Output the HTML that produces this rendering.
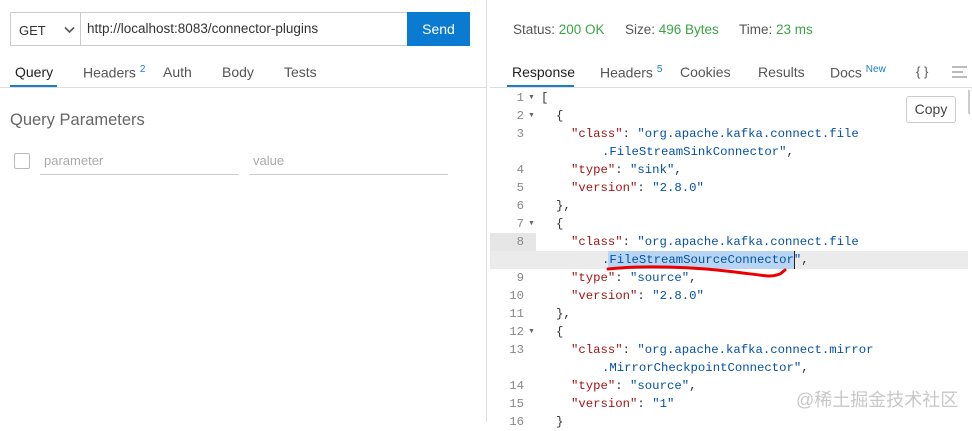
<!DOCTYPE html>
<html><head><meta charset="utf-8"><style>
*{margin:0;padding:0;box-sizing:border-box}
body{width:972px;height:422px;background:#fff;position:relative;overflow:hidden;font-family:"Liberation Sans","DejaVu Sans",sans-serif;color:#333}
.a{position:absolute;white-space:nowrap}
.code{font-family:"Liberation Mono",monospace;font-size:12.3px;line-height:18px;color:#333}
.k{color:#a31515}.s{color:#0451a5}
.ln{position:absolute;left:490px;width:34px;text-align:right;font-family:"Liberation Mono",monospace;font-size:12.3px;line-height:18px;color:#888}
.fa{position:absolute;left:528px;font-size:7px;color:#666}
</style></head><body>
<!-- left -->
<div class="a" style="left:10px;top:12px;width:71px;height:34px;border:1px solid #ccc"></div>
<div class="a" style="left:19px;top:23px;font-size:13px;color:#333">GET</div>
<svg class="a" style="left:64px;top:26px" width="11" height="8"><path d="M1 1.5L5.5 6L10 1.5" fill="none" stroke="#555" stroke-width="1.6"/></svg>
<div class="a" style="left:80px;top:12px;width:328px;height:34px;border:1px solid #ccc;border-left:none"></div>
<div class="a" style="left:87px;top:21px;font-size:13.5px;color:#333">http://localhost:8083/connector-plugins</div>
<div class="a" style="left:407px;top:12px;width:63px;height:34px;background:#0a7bd0;color:#fff;font-size:14px;text-align:center;line-height:34px">Send</div>
<div class="a" style="left:15px;top:64px;font-size:14px;color:#222">Query</div>
<div class="a" style="left:10px;top:85px;width:47px;height:3px;background:#1a7fc4"></div>
<div class="a" style="left:83px;top:64px;font-size:14px;color:#555">Headers <sup style="font-size:10px;color:#1a7fc4">2</sup></div>
<div class="a" style="left:163px;top:64px;font-size:14px;color:#555">Auth</div>
<div class="a" style="left:222px;top:64px;font-size:14px;color:#555">Body</div>
<div class="a" style="left:284px;top:64px;font-size:14px;color:#555">Tests</div>
<div class="a" style="left:0;top:87px;width:486px;height:1px;background:#ddd"></div>
<div class="a" style="left:10px;top:111px;font-size:16.5px;color:#666">Query Parameters</div>
<div class="a" style="left:14px;top:153px;width:16px;height:16px;border:1px solid #bbb;border-radius:2px"></div>
<div class="a" style="left:44px;top:153px;font-size:13px;color:#aaa">parameter</div>
<div class="a" style="left:40px;top:174px;width:199px;height:1px;background:#ccc"></div>
<div class="a" style="left:253px;top:153px;font-size:13px;color:#aaa">value</div>
<div class="a" style="left:249px;top:174px;width:199px;height:1px;background:#ccc"></div>
<div class="a" style="left:486px;top:0;width:1px;height:422px;background:#ddd"></div>
<!-- right -->
<div class="a" style="left:513px;top:22px;font-size:13.5px;color:#555">Status: <span style="color:#3aa545">200 OK</span></div>
<div class="a" style="left:625px;top:22px;font-size:13.5px;color:#555">Size: <span style="color:#3aa545">496 Bytes</span></div>
<div class="a" style="left:739px;top:22px;font-size:13.5px;color:#555">Time: <span style="color:#3aa545">23 ms</span></div>
<div class="a" style="left:512px;top:64px;font-size:14px;color:#222">Response</div>
<div class="a" style="left:507px;top:85px;width:67px;height:3px;background:#1a7fc4"></div>
<div class="a" style="left:600px;top:64px;font-size:14px;color:#555">Headers <sup style="font-size:10px;color:#1a7fc4">5</sup></div>
<div class="a" style="left:680px;top:64px;font-size:14px;color:#555">Cookies</div>
<div class="a" style="left:758px;top:64px;font-size:14px;color:#555">Results</div>
<div class="a" style="left:830px;top:64px;font-size:14px;color:#555">Docs <sup style="font-size:10px;color:#1a7fc4">New</sup></div>
<div class="a" style="left:916px;top:64px;font-size:13px;color:#555">{ }</div>
<svg class="a" style="left:952px;top:66px" width="16" height="12"><path d="M0 1H15M0 6H11M0 11H15" stroke="#777" stroke-width="1.1"/></svg>
<div class="a" style="left:490px;top:87px;width:482px;height:1px;background:#ddd"></div>
<div class="a" style="left:968px;top:90px;width:2px;height:24px;background:#ccc"></div>
<div class="a" style="left:906px;top:96px;width:50px;height:27px;border:1px solid #ccc;border-radius:3px;font-size:14px;color:#444;text-align:center;line-height:25px;background:#fff">Copy</div>
<!-- highlight -->
<div class="a" style="left:490px;top:233px;width:46px;height:18px;background:#e6e6e6"></div>
<div class="a" style="left:490px;top:251px;width:478px;height:18px;background:#ebebeb"></div>
<div class="a" style="left:608px;top:251px;width:186px;height:18px;background:#b9d5f4"></div>
<div class="a" style="left:794px;top:251px;width:1px;height:18px;background:#222"></div>
<!-- line numbers -->
<div class="ln" style="top:89px">1</div><div class="fa" style="top:94px">▼</div>
<div class="ln" style="top:107px">2</div><div class="fa" style="top:112px">▼</div>
<div class="ln" style="top:125px">3</div>
<div class="ln" style="top:161px">4</div>
<div class="ln" style="top:179px">5</div>
<div class="ln" style="top:197px">6</div>
<div class="ln" style="top:215px">7</div><div class="fa" style="top:220px">▼</div>
<div class="ln" style="top:233px">8</div>
<div class="ln" style="top:269px">9</div>
<div class="ln" style="top:287px">10</div>
<div class="ln" style="top:305px">11</div>
<div class="ln" style="top:323px">12</div><div class="fa" style="top:328px">▼</div>
<div class="ln" style="top:341px">13</div>
<div class="ln" style="top:377px">14</div>
<div class="ln" style="top:395px">15</div>
<div class="ln" style="top:413px">16</div>
<!-- code -->
<div class="a code" style="left:541px;top:89px">[</div>
<div class="a code" style="left:556px;top:107px">{</div>
<div class="a code" style="left:571px;top:125px"><span class="k">"class"</span>: <span class="s">"org.apache.kafka.connect.file</span></div>
<div class="a code" style="left:602px;top:143px"><span class="s">.FileStreamSinkConnector"</span>,</div>
<div class="a code" style="left:571px;top:161px"><span class="k">"type"</span>: <span class="s">"sink"</span>,</div>
<div class="a code" style="left:571px;top:179px"><span class="k">"version"</span>: <span class="s">"2.8.0"</span></div>
<div class="a code" style="left:556px;top:197px">},</div>
<div class="a code" style="left:556px;top:215px">{</div>
<div class="a code" style="left:571px;top:233px"><span class="k">"class"</span>: <span class="s">"org.apache.kafka.connect.file</span></div>
<div class="a code" style="left:602px;top:251px"><span class="s">.FileStreamSourceConnector"</span>,</div>
<div class="a code" style="left:571px;top:269px"><span class="k">"type"</span>: <span class="s">"source"</span>,</div>
<div class="a code" style="left:571px;top:287px"><span class="k">"version"</span>: <span class="s">"2.8.0"</span></div>
<div class="a code" style="left:556px;top:305px">},</div>
<div class="a code" style="left:556px;top:323px">{</div>
<div class="a code" style="left:571px;top:341px"><span class="k">"class"</span>: <span class="s">"org.apache.kafka.connect.mirror</span></div>
<div class="a code" style="left:602px;top:359px"><span class="s">.MirrorCheckpointConnector"</span>,</div>
<div class="a code" style="left:571px;top:377px"><span class="k">"type"</span>: <span class="s">"source"</span>,</div>
<div class="a code" style="left:571px;top:395px"><span class="k">"version"</span>: <span class="s">"1"</span></div>
<div class="a code" style="left:556px;top:413px">}</div>
<svg class="a" style="left:605px;top:264px" width="185" height="20"><path d="M3 5C40 1 90 3 130 8S165 13 175 10L180 6" fill="none" stroke="#e00" stroke-width="3" stroke-linecap="round"/></svg>
<div class="a" style="left:796px;top:386px;font-size:18px;color:#c8c8c8;font-family:'Liberation Sans','Noto Sans CJK SC',sans-serif">@稀土掘金技术社区</div>
</body></html>
